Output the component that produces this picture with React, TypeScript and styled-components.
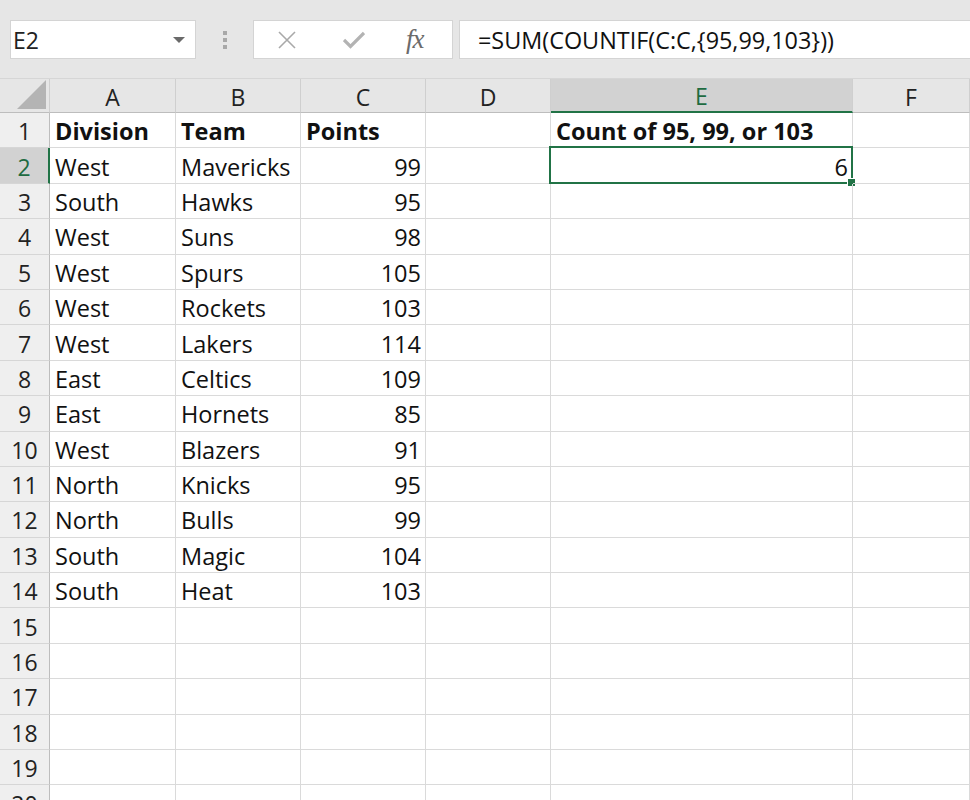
import React from 'react';
import styled, { createGlobalStyle } from 'styled-components';

const GlobalStyle = createGlobalStyle`
  html, body {
    margin: 0;
    padding: 0;
    background: #ffffff;
  }
  * {
    box-sizing: border-box;
  }
`;

const Sheet = styled.div`
  width: 970px;
  height: 800px;
  overflow: hidden;
  font-family: "Open Sans", "Noto Sans", sans-serif;
  color: #111;
`;

const FormulaBar = styled.div`
  height: 79px;
  background: #e6e6e6;
  display: flex;
  align-items: flex-start;
  padding: 20px 0 0 10px;
  border-bottom: 1px solid #d6d6d6;
`;

const NameBox = styled.div`
  width: 186px;
  height: 39px;
  background: #fff;
  border: 1px solid #d4d4d4;
  display: flex;
  align-items: center;
  justify-content: space-between;
  padding: 0 10px 0 2px;
  font-size: 23px;
  color: #222;
`;

const Caret = styled.span`
  width: 0;
  height: 0;
  border-left: 6px solid transparent;
  border-right: 6px solid transparent;
  border-top: 6px solid #6a6a6a;
`;

const Grip = styled.div`
  width: 57px;
  height: 39px;
  display: flex;
  flex-direction: column;
  align-items: center;
  justify-content: center;
  gap: 3px;
  span {
    width: 4px;
    height: 4px;
    background: #a8a8a8;
  }
`;

const ActionBox = styled.div`
  width: 200px;
  height: 39px;
  background: #fff;
  border: 1px solid #d4d4d4;
  display: flex;
  align-items: center;
  padding-left: 23px;
`;

const ActionSlot = styled.div<{ $w: number }>`
  width: ${p => p.$w}px;
  display: flex;
  align-items: center;
  justify-content: flex-start;
`;

const Fx = styled.span`
  font-family: "Liberation Serif", "DejaVu Serif", serif;
  font-style: italic;
  font-size: 27px;
  color: #6b6b6b;
  letter-spacing: -1px;
  margin-left: -3px;
`;

const FormulaInput = styled.div`
  flex: 1;
  height: 39px;
  margin-left: 6px;
  background: #fff;
  border: 1px solid #d4d4d4;
  border-right: none;
  display: flex;
  align-items: center;
  padding-left: 18px;
  font-size: 23.4px;
  color: #111;
  white-space: nowrap;
`;

const Grid = styled.div`
  display: grid;
  grid-template-columns: 50px 126px 125px 125px 125px 302px 1fr;
  grid-template-rows: 34px;
  grid-auto-rows: 35.4px;
`;

const Corner = styled.div`
  background: #e6e6e6;
  border-right: 1px solid #cfcfcf;
  border-bottom: 1px solid #bdbdbd;
  display: flex;
  align-items: flex-end;
  justify-content: flex-end;
  padding: 0 3px 3px 0;
`;

const ColHead = styled.div<{ $active?: boolean }>`
  background: ${p => (p.$active ? '#d2d2d2' : '#e6e6e6')};
  border-right: 1px solid #cfcfcf;
  border-bottom: ${p => (p.$active ? '2px solid #217346' : '1px solid #bdbdbd')};
  color: ${p => (p.$active ? '#1e6b41' : '#222')};
  display: flex;
  align-items: center;
  justify-content: center;
  font-size: 23px;
  padding-top: 2px;
`;

const RowHead = styled.div<{ $active?: boolean }>`
  background: ${p => (p.$active ? '#d2d2d2' : '#efefef')};
  border-right: ${p => (p.$active ? '2px solid #217346' : '1px solid #bdbdbd')};
  border-bottom: 1px solid #d6d6d6;
  color: ${p => (p.$active ? '#1e6b41' : '#222')};
  display: flex;
  align-items: center;
  justify-content: center;
  font-size: 23px;
  padding-top: 2px;
`;

const Cell = styled.div<{ $align?: 'left' | 'right'; $bold?: boolean }>`
  position: relative;
  border-right: 1px solid #dadada;
  border-bottom: 1px solid #dadada;
  display: flex;
  align-items: center;
  justify-content: ${p => (p.$align === 'right' ? 'flex-end' : 'flex-start')};
  padding: 2px 4px 0 5px;
  font-size: 23.5px;
  font-weight: ${p => (p.$bold ? 700 : 400)};
  white-space: nowrap;
  overflow: visible;
`;

const Selection = styled.div`
  position: absolute;
  left: -2px;
  top: -2px;
  right: -1px;
  bottom: -1px;
  border: 2px solid #217346;
  pointer-events: none;
  &::after {
    content: '';
    position: absolute;
    right: -5px;
    bottom: -5px;
    width: 7px;
    height: 7px;
    background: #217346;
    border: 1px solid #fff;
  }
`;

type Row = [string, string, string];

const rows: Row[] = [
  ['West', 'Mavericks', '99'],
  ['South', 'Hawks', '95'],
  ['West', 'Suns', '98'],
  ['West', 'Spurs', '105'],
  ['West', 'Rockets', '103'],
  ['West', 'Lakers', '114'],
  ['East', 'Celtics', '109'],
  ['East', 'Hornets', '85'],
  ['West', 'Blazers', '91'],
  ['North', 'Knicks', '95'],
  ['North', 'Bulls', '99'],
  ['South', 'Magic', '104'],
  ['South', 'Heat', '103'],
];

const columns = ['A', 'B', 'C', 'D', 'E', 'F'];

const CrossIcon = () => (
  <svg width="20" height="20" viewBox="0 0 20 20">
    <path d="M2 2 L18 18 M18 2 L2 18" stroke="#a9a9a9" strokeWidth="1.6" fill="none" />
  </svg>
);

const CheckIcon = () => (
  <svg width="22" height="18" viewBox="0 0 22 18">
    <path d="M1 9 L7.5 15.5 L21 2" stroke="#b3b3b3" strokeWidth="3.2" fill="none" />
  </svg>
);

const CornerTriangle = () => (
  <svg width="29" height="29" viewBox="0 0 29 29">
    <polygon points="29,0 29,29 0,29" fill="#b4b4b4" />
  </svg>
);

const App: React.FC = () => {
  const totalRows = 20;

  const renderRow = (n: number) => {
    const data = n >= 2 ? rows[n - 2] : undefined;
    const isHeader = n === 1;
    return (
      <React.Fragment key={n}>
        <RowHead $active={n === 2}>{n}</RowHead>
        <Cell $bold={isHeader}>{isHeader ? 'Division' : data?.[0]}</Cell>
        <Cell $bold={isHeader}>{isHeader ? 'Team' : data?.[1]}</Cell>
        <Cell $bold={isHeader} $align={isHeader ? 'left' : 'right'}>
          {isHeader ? 'Points' : data?.[2]}
        </Cell>
        <Cell />
        {n === 1 ? (
          <Cell $bold>Count of 95, 99, or 103</Cell>
        ) : n === 2 ? (
          <Cell $align="right">
            6
            <Selection />
          </Cell>
        ) : (
          <Cell />
        )}
        <Cell />
      </React.Fragment>
    );
  };

  return (
    <Sheet>
      <GlobalStyle />
      <FormulaBar>
        <NameBox>
          <span>E2</span>
          <Caret />
        </NameBox>
        <Grip>
          <span />
          <span />
          <span />
        </Grip>
        <ActionBox>
          <ActionSlot $w={66}>
            <CrossIcon />
          </ActionSlot>
          <ActionSlot $w={66}>
            <CheckIcon />
          </ActionSlot>
          <ActionSlot $w={40}>
            <Fx>fx</Fx>
          </ActionSlot>
        </ActionBox>
        <FormulaInput>=SUM(COUNTIF(C:C,{'{'}95,99,103{'}'}))</FormulaInput>
      </FormulaBar>
      <Grid>
        <Corner>
          <CornerTriangle />
        </Corner>
        {columns.map(c => (
          <ColHead key={c} $active={c === 'E'}>
            {c}
          </ColHead>
        ))}
        {Array.from({ length: totalRows }, (_, i) => renderRow(i + 1))}
      </Grid>
    </Sheet>
  );
};

export default App;
